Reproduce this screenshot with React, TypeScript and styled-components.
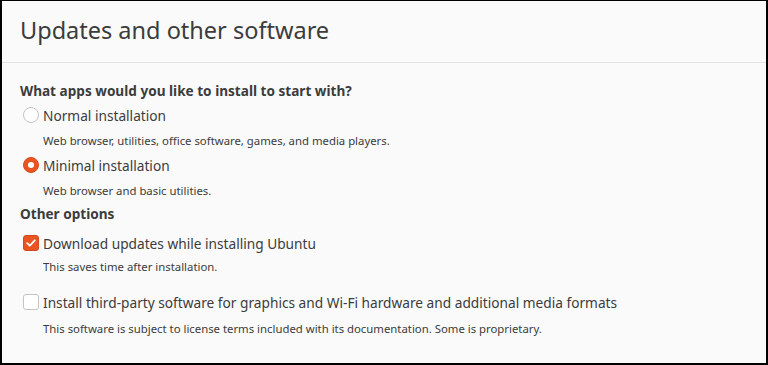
import React from "react";
import styled, { createGlobalStyle } from "styled-components";

const Global = createGlobalStyle`
  html, body { margin: 0; padding: 0; background: #fafafa; }
  * { box-sizing: border-box; }
`;

const Frame = styled.div`
  width: 768px;
  height: 365px;
  background: #fafafa;
  border-top: 1px solid #000;
  border-left: 2px solid #000;
  border-right: 2px solid #000;
  border-bottom: 2px solid #000;
  font-family: "Noto Sans", "DejaVu Sans", sans-serif;
  color: #3c3c3c;
  display: flex;
  flex-direction: column;
  overflow: hidden;
`;

const Header = styled.div`
  height: 62px;
  padding: 0 0 3px 18px;
  display: flex;
  align-items: center;
  border-bottom: 1px solid #e2e2e2;
`;

const Title = styled.h1`
  margin: 0;
  font-weight: 400;
  font-size: 23.5px;
  color: #3c3c3c;
`;

const Content = styled.div`
  padding: 18px 0 0 18px;
  display: flex;
  flex-direction: column;
`;

const Heading = styled.div<{ $mt?: number }>`
  font-weight: 700;
  font-size: 13.6px;
  line-height: 20px;
  margin-top: ${(p) => p.$mt ?? 0}px;
`;

const Option = styled.div<{ $mt?: number }>`
  display: flex;
  flex-direction: column;
  margin-top: ${(p) => p.$mt ?? 0}px;
`;

const Row = styled.label`
  display: flex;
  align-items: center;
  height: 20px;
  gap: 4px;
  padding-left: 3px;
  font-size: 13.7px;
`;

const Desc = styled.div<{ $mt?: number }>`
  padding-left: 23px;
  margin-top: ${(p) => p.$mt ?? 7}px;
  font-size: 11.35px;
  line-height: 18px;
`;

const Radio = styled.span<{ $on?: boolean }>`
  width: 16px;
  height: 16px;
  border-radius: 50%;
  flex: none;
  display: flex;
  align-items: center;
  justify-content: center;
  background: ${(p) => (p.$on ? "#e95420" : "#ffffff")};
  border: 1px solid ${(p) => (p.$on ? "#d64a1a" : "#c4c4c4")};
  &::after {
    content: "";
    display: ${(p) => (p.$on ? "block" : "none")};
    width: 6px;
    height: 6px;
    border-radius: 50%;
    background: #fff;
  }
`;

const Box = styled.span<{ $on?: boolean }>`
  width: 16px;
  height: 16px;
  border-radius: 3px;
  flex: none;
  display: flex;
  align-items: center;
  justify-content: center;
  background: ${(p) => (p.$on ? "#e95420" : "#ffffff")};
  border: 1px solid ${(p) => (p.$on ? "#d64a1a" : "#c4c4c4")};
`;

const Check = () => (
  <svg width="12" height="12" viewBox="0 0 12 12">
    <path d="M2.2 6.2 L4.8 8.7 L9.8 3.3" fill="none" stroke="#fff" strokeWidth="1.8" strokeLinecap="round" strokeLinejoin="round" />
  </svg>
);

export default function App() {
  return (
    <>
      <Global />
      <Frame>
        <Header>
          <Title>Updates and other software</Title>
        </Header>
        <Content>
          <Heading>What apps would you like to install to start with?</Heading>
          <Option $mt={4}>
            <Row><Radio />Normal installation</Row>
            <Desc>Web browser, utilities, office software, games, and media players.</Desc>
          </Option>
          <Option $mt={5}>
            <Row><Radio $on />Minimal installation</Row>
            <Desc>Web browser and basic utilities.</Desc>
          </Option>
          <Heading $mt={4}>Other options</Heading>
          <Option $mt={9}>
            <Row><Box $on><Check /></Box>Download updates while installing Ubuntu</Row>
            <Desc $mt={5}>This saves time after installation.</Desc>
          </Option>
          <Option $mt={16}>
            <Row><Box />Install third-party software for graphics and Wi-Fi hardware and additional media formats</Row>
            <Desc $mt={8}>This software is subject to license terms included with its documentation. Some is proprietary.</Desc>
          </Option>
        </Content>
      </Frame>
    </>
  );
}
